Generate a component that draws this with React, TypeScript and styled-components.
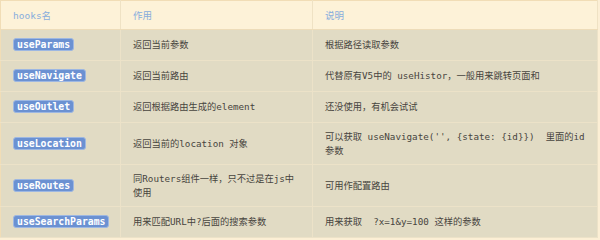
import React from 'react';
import styled, { createGlobalStyle } from 'styled-components';

const GlobalStyle = createGlobalStyle`
  html, body {
    margin: 0;
    padding: 0;
    background: #fcefd5;
  }
`;

const Wrap = styled.div`
  width: 600px;
  height: 240px;
  overflow: hidden;
`;

const Table = styled.table`
  width: 598px;
  border-collapse: collapse;
  border: 1px solid #f1ddb6;
  table-layout: fixed;
  font-family: 'DejaVu Sans Mono', 'Noto Sans CJK SC', monospace;
  font-size: 9.25px;
`;

const HeadCell = styled.th`
  background: #fdf2d8;
  color: #88addd;
  font-weight: normal;
  font-size: 9.5px;
  text-align: left;
  height: 28px;
  padding: 0 12px;
  border-right: 1px solid #efe2c4;
  border-bottom: 1px solid #eddcb9;
`;

const Row = styled.tr`
  background: #e1dbc4;
`;

const Cell = styled.td<{ $tall?: boolean }>`
  color: #47443e;
  height: ${p => (p.$tall ? 41 : 30)}px;
  padding: 0 12px;
  line-height: 14px;
  border-right: 1px solid #ece2c8;
  border-bottom: 1px solid #ece2c8;
  white-space: pre;
  overflow: hidden;
`;

const Hook = styled.span`
  display: inline-block;
  background: #6b91d2;
  border: 1px solid #9db7e2;
  border-radius: 3px;
  color: #fff;
  font-family: 'DejaVu Sans Mono', monospace;
  font-weight: bold;
  font-size: 9.8px;
  line-height: 11px;
  padding: 0 3px;
`;

type Item = { name: string; use: React.ReactNode; note: React.ReactNode; tall?: boolean };

const items: Item[] = [
  { name: 'useParams', use: '返回当前参数', note: '根据路径读取参数' },
  { name: 'useNavigate', use: '返回当前路由', note: '代替原有V5中的 useHistor，一般用来跳转页面和' },
  { name: 'useOutlet', use: '返回根据路由生成的element', note: '还没使用，有机会试试' },
  {
    name: 'useLocation',
    use: '返回当前的location 对象',
    note: (
      <>
        {"可以获取 useNavigate('', {state: {id}})  里面的id"}
        <br />
        参数
      </>
    ),
    tall: true,
  },
  {
    name: 'useRoutes',
    use: (
      <>
        同Routers组件一样，只不过是在js中
        <br />
        使用
      </>
    ),
    note: '可用作配置路由',
    tall: true,
  },
  { name: 'useSearchParams', use: '用来匹配URL中?后面的搜索参数', note: '用来获取  ?x=1&y=100 这样的参数' },
];

export default function App() {
  return (
    <Wrap>
      <GlobalStyle />
      <Table>
        <colgroup>
          <col style={{ width: 120 }} />
          <col style={{ width: 192 }} />
          <col />
        </colgroup>
        <thead>
          <tr>
            <HeadCell>hooks名</HeadCell>
            <HeadCell>作用</HeadCell>
            <HeadCell>说明</HeadCell>
          </tr>
        </thead>
        <tbody>
          {items.map(it => (
            <Row key={it.name}>
              <Cell $tall={it.tall}>
                <Hook>{it.name}</Hook>
              </Cell>
              <Cell $tall={it.tall}>{it.use}</Cell>
              <Cell $tall={it.tall}>{it.note}</Cell>
            </Row>
          ))}
        </tbody>
      </Table>
    </Wrap>
  );
}
